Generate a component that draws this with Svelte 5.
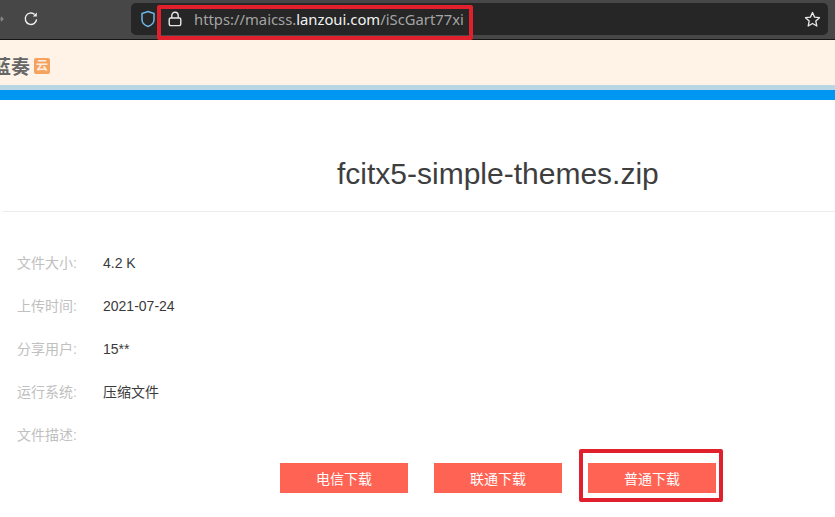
<script>
  const fields = [
    { label: "文件大小:", value: "4.2 K" },
    { label: "上传时间:", value: "2021-07-24" },
    { label: "分享用户:", value: "15**" },
    { label: "运行系统:", value: "压缩文件" },
    { label: "文件描述:", value: "" }
  ];
  const buttons = ["电信下载", "联通下载", "普通下载"];
</script>

<div class="page">
  <header class="toolbar">
    <svg class="forward" viewBox="0 0 4 6" width="4" height="6" fill="none" stroke="#8a8a8a" stroke-width="1.2">
      <path d="M0 3h3M1 1l2 2-2 2" />
    </svg>
    <svg class="reload" viewBox="0 0 16 16" width="16" height="16" fill="none" stroke="#f0f0f0" stroke-width="1.4">
      <path d="M13.6 8.4A5.7 5.7 0 1 1 11.6 3.4" />
      <path d="M13.8 1.6v4h-4z" fill="#f0f0f0" stroke="none" />
    </svg>
    <div class="urlbar">
      <svg class="shield" viewBox="0 0 16 18" width="16" height="18" fill="none" stroke="#6db8e8" stroke-width="1.5">
        <path d="M8 1.5l6 2v6c0 3.4-2.6 5.8-6 7-3.4-1.2-6-3.6-6-7v-6z" />
      </svg>
      <svg class="lock" viewBox="0 0 14 16" width="14" height="16" fill="none" stroke="#e8e8e8" stroke-width="1.4">
        <rect x="1.2" y="7" width="11.6" height="7.6" rx="1.5" />
        <path d="M3.8 7V4.4a3.2 3.2 0 0 1 6.4 0V7" />
      </svg>
      <span class="url">https://maicss.<b>lanzoui.com</b>/iScGart77xi</span>
      <svg class="star" viewBox="0 0 18 18" width="17" height="17" fill="none" stroke="#e8e8e8" stroke-width="1.4" stroke-linejoin="round">
        <path d="M9 1.6l2.2 4.9 5.2.6-3.9 3.5 1.1 5.3L9 13.2l-4.6 2.7 1.1-5.3L1.6 7.1l5.2-.6z" />
      </svg>
    </div>
  </header>

  <div class="banner">
    <span class="brand">蓝奏</span>
    <span class="cloud">云</span>
  </div>
  <div class="strip"></div>

  <main>
    <h1>fcitx5-simple-themes.zip</h1>
    <div class="info">
      {#each fields as f}
        <div class="row">
          <span class="label">{f.label}</span>
          <span class="value">{f.value}</span>
        </div>
      {/each}
    </div>
    <div class="actions">
      {#each buttons as b}
        <button>{b}</button>
      {/each}
    </div>
  </main>

  <div class="mark mark-url"></div>
  <div class="mark mark-btn"></div>
</div>

<style>
  :global(body) {
    margin: 0;
    background: #fff;
  }

  .page {
    position: relative;
    width: 835px;
    height: 517px;
    overflow: hidden;
    font-family: "Liberation Sans", "Noto Sans CJK SC", sans-serif;
  }

  .toolbar {
    height: 40px;
    box-sizing: border-box;
    background: #474747;
    border-bottom: 1px solid #161616;
    display: flex;
    align-items: center;
    padding: 0 7px 1px 0;
  }

  .forward {
    margin-right: 19px;
  }

  .reload {
    margin-right: 92px;
  }

  .urlbar {
    flex: 1;
    height: 32px;
    background: #262626;
    border-radius: 5px;
    display: flex;
    align-items: center;
    padding: 0 7px 0 9px;
  }

  .shield {
    margin-right: 12px;
  }

  .lock {
    margin-right: 12px;
  }

  .url {
    flex: 1;
    font-family: "Noto Sans", sans-serif;
    font-size: 14.8px;
    color: #a4a4a4;
    white-space: nowrap;
  }

  .url b {
    font-weight: 400;
    color: #f2f2f2;
  }

  .banner {
    height: 45px;
    box-sizing: border-box;
    background: #fff3e8;
    display: flex;
    align-items: center;
    gap: 4px;
    padding-top: 6px;
    overflow: hidden;
  }

  .brand {
    margin-left: -8px;
    font-size: 19px;
    font-weight: 700;
    color: #666;
  }

  .cloud {
    width: 16px;
    height: 16px;
    border-radius: 2px;
    background: #f3a25f;
    color: #ffeadb;
    font-size: 12px;
    font-weight: 700;
    line-height: 16px;
    text-align: center;
  }

  .strip {
    height: 15px;
    box-sizing: border-box;
    background: #0097f2;
    border-top: 5px solid #b9d6e4;
  }

  main {
    padding: 0 0 0 2px;
  }

  h1 {
    margin: 0;
    height: 112px;
    box-sizing: border-box;
    padding: 56px 0 0 335px;
    border-bottom: 1px solid #ececec;
    font-size: 30px;
    line-height: 36px;
    font-weight: 400;
    color: #3e3e3e;
  }

  .info {
    padding: 30px 0 0 15px;
  }

  .row {
    height: 43px;
    line-height: 43px;
    display: flex;
    font-size: 14px;
  }

  .label {
    width: 86px;
    color: #c0c0c0;
  }

  .value {
    color: #3a3a3a;
  }

  .actions {
    display: flex;
    gap: 26px;
    margin: 6px 0 0 278px;
  }

  button {
    width: 128px;
    height: 30px;
    padding: 0;
    border: none;
    background: #ff6353;
    color: #fff;
    font-family: inherit;
    font-size: 14px;
  }

  .mark {
    position: absolute;
    box-sizing: border-box;
    border: 4px solid #e0202c;
    border-radius: 2px;
  }

  .mark-url {
    left: 157px;
    top: 5px;
    width: 316px;
    height: 35px;
  }

  .mark-btn {
    left: 579px;
    top: 449px;
    width: 144px;
    height: 53px;
  }
</style>
